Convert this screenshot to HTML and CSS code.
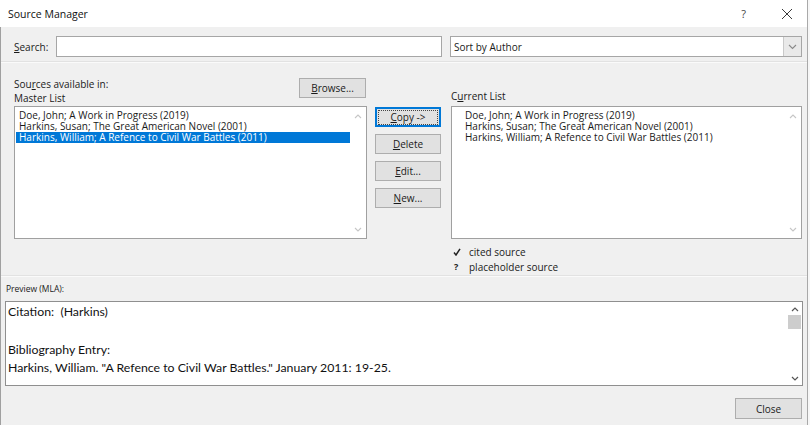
FILE: index.html
```html
<!DOCTYPE html>
<html>
<head>
<meta charset="utf-8">
<link rel="stylesheet" href="styles.css">
</head>
<body>
<div class="dialog">
  <div class="titlebar">
    <span class="title">Source Manager</span>
    <span class="help">?</span>
    <span class="xbtn">
      <svg width="12" height="12" viewBox="0 0 12 12"><path d="M1 1 L11 11 M11 1 L1 11" stroke="#3a3a3a" stroke-width="1" fill="none"/></svg>
    </span>
  </div>
  <div class="main">
    <div class="search-row">
      <span class="lbl"><u>S</u>earch:</span>
      <div class="input search-input"></div>
      <div class="combo">
        <span class="combo-text">Sort by Author</span>
        <span class="combo-btn">
          <svg width="9" height="6" viewBox="0 0 9 6"><path d="M1 1 L4.5 4.5 L8 1" stroke="#8a8a8a" stroke-width="1.1" fill="none"/></svg>
        </span>
      </div>
    </div>
    <div class="sep"></div>
    <div class="lists">
      <div class="col col-left">
        <div class="head head-left">
          <div class="head-text">
            <div>Sou<u>r</u>ces available in:</div>
            <div>Master List</div>
          </div>
          <div class="btn browse"><span><u>B</u>rowse...</span></div>
        </div>
        <div class="listbox">
          <div class="items">
            <div class="item">Doe, John; A Work in Progress (2019)</div>
            <div class="item">Harkins, Susan; The Great American Novel (2001)</div>
            <div class="item selected">Harkins, William; A Refence to Civil War Battles (2011)</div>
          </div>
          <div class="vscroll">
            <svg width="8" height="5" viewBox="0 0 8 5"><path d="M1 4 L4 1 L7 4" stroke="#c6c6c6" stroke-width="1.1" fill="none"/></svg>
            <svg width="8" height="5" viewBox="0 0 8 5"><path d="M1 1 L4 4 L7 1" stroke="#c6c6c6" stroke-width="1.1" fill="none"/></svg>
          </div>
        </div>
      </div>
      <div class="col col-mid">
        <div class="btn focused"><span class="focus-ring"><u>C</u>opy -&gt;</span></div>
        <div class="btn"><span><u>D</u>elete</span></div>
        <div class="btn"><span><u>E</u>dit...</span></div>
        <div class="btn"><span><u>N</u>ew...</span></div>
      </div>
      <div class="col col-right">
        <div class="head head-right"><span>C<u>u</u>rrent List</span></div>
        <div class="listbox">
          <div class="items items-right">
            <div class="item">Doe, John; A Work in Progress (2019)</div>
            <div class="item">Harkins, Susan; The Great American Novel (2001)</div>
            <div class="item">Harkins, William; A Refence to Civil War Battles (2011)</div>
          </div>
          <div class="vscroll">
            <svg width="8" height="5" viewBox="0 0 8 5"><path d="M1 4 L4 1 L7 4" stroke="#c6c6c6" stroke-width="1.1" fill="none"/></svg>
            <svg width="8" height="5" viewBox="0 0 8 5"><path d="M1 1 L4 4 L7 1" stroke="#c6c6c6" stroke-width="1.1" fill="none"/></svg>
          </div>
        </div>
        <div class="legend">
          <div class="legend-row">
            <span class="mark"><svg width="8" height="8" viewBox="0 0 8 8"><path d="M1 4.6 L3 7 L7 0.8" stroke="#222" stroke-width="1.5" fill="none"/></svg></span>
            <span>cited source</span>
          </div>
          <div class="legend-row">
            <span class="mark q">?</span>
            <span>placeholder source</span>
          </div>
        </div>
      </div>
    </div>
    <div class="sep sep2"></div>
    <div class="preview-label">Preview (MLA):</div>
    <div class="preview">
      <div class="preview-text">
        <div class="pline">Citation:&nbsp; (Harkins)</div>
        <div class="pline">&nbsp;</div>
        <div class="pline">Bibliography Entry:</div>
        <div class="pline">Harkins, William. "A Refence to Civil War Battles." January 2011: 19-25.</div>
      </div>
      <div class="pscroll">
        <svg width="8" height="5" viewBox="0 0 8 5"><path d="M1 4 L4 1 L7 4" stroke="#555" stroke-width="1.2" fill="none"/></svg>
        <div class="thumb"></div>
        <div class="pscroll-fill"></div>
        <svg width="8" height="5" viewBox="0 0 8 5"><path d="M1 1 L4 4 L7 1" stroke="#555" stroke-width="1.2" fill="none"/></svg>
      </div>
    </div>
    <div class="footer">
      <div class="btn close-btn"><span>Close</span></div>
    </div>
  </div>
</div>
</body>
</html>
```

FILE: styles.css
```css
html, body {
  margin: 0;
  padding: 0;
}
body {
  background: #f7f7f7;
  font-family: "Open Sans", "Noto Sans", sans-serif;
  font-size: 10px;
  color: #1a1a1a;
  width: 810px;
  height: 425px;
  overflow: hidden;
}
u { text-decoration: underline; text-underline-offset: 1px; }

.dialog {
  width: 807px;
  height: 425px;
  border-right: 1px solid #a9a9a9;
  display: flex;
  flex-direction: column;
}

.titlebar {
  height: 27px;
  background: #ffffff;
  display: flex;
  align-items: center;
  padding-left: 8px;
}
.title {
  font-size: 10.5px;
  color: #111;
  flex: 1;
}
.help {
  font-size: 11px;
  color: #444;
  margin-right: 35px;
}
.xbtn {
  display: flex;
  margin-right: 14px;
}

.main {
  flex: 1;
  background: #f0f0f0;
  border-left: 1px solid #a0a0a0;
  display: flex;
  flex-direction: column;
}

.search-row {
  display: flex;
  align-items: center;
  margin-top: 9px;
  padding-left: 13px;
  height: 21px;
}
.lbl {
  width: 42px;
}
.input {
  background: #fff;
  border: 1px solid #a6a6a6;
  box-sizing: border-box;
}
.search-input {
  width: 386px;
  height: 21px;
}
.combo {
  margin-left: 8px;
  width: 352px;
  height: 21px;
  box-sizing: border-box;
  background: #fff;
  border: 1px solid #a6a6a6;
  display: flex;
  align-items: center;
}
.combo-text {
  flex: 1;
  padding-left: 3px;
}
.combo-btn {
  width: 17px;
  height: 19px;
  background: #e9e9e9;
  border-left: 1px solid #c9c9c9;
  display: flex;
  align-items: center;
  justify-content: center;
}

.sep {
  height: 1px;
  background: #e2e2e2;
  border-bottom: 1px solid #fafafa;
  margin-top: 4px;
}

.lists {
  display: flex;
  padding-left: 13px;
}
.col { display: flex; flex-direction: column; }
.col-left { width: 353px; }
.col-mid { width: 66px; margin-left: 8px; padding-top: 44px; gap: 7px; }
.col-right { width: 351px; margin-left: 10px; }

.head {
  height: 43px;
  box-sizing: border-box;
}
.head-left {
  display: flex;
  justify-content: space-between;
  align-items: flex-start;
  padding-top: 14px;
}
.head-text { line-height: 14px; }
.head-right {
  display: flex;
  align-items: flex-end;
  padding-bottom: 3px;
}

.btn {
  height: 20px;
  box-sizing: border-box;
  background: #e1e1e1;
  border: 1px solid #adadad;
  display: flex;
  align-items: center;
  justify-content: center;
}
.browse {
  width: 67px;
  margin-top: 1px;
  margin-right: 1px;
}
.btn.focused {
  border: 1px solid #0078d7;
  box-shadow: inset 0 0 0 1px #0078d7;
}
.focus-ring {
  display: flex;
  align-items: center;
  justify-content: center;
  width: 58px;
  height: 13px;
  outline: 1px dotted #444;
}

.listbox {
  height: 133px;
  box-sizing: border-box;
  background: #fff;
  border: 1px solid #a0a0a0;
  display: flex;
}
.items {
  flex: 1;
  padding: 3px 0 0 1px;
}
.items-right { padding-left: 10px; }
.item {
  height: 11px;
  line-height: 11px;
  padding-left: 3px;
  white-space: nowrap;
}
.item.selected {
  background: #0078d7;
  color: #fff;
}
.vscroll {
  width: 16px;
  display: flex;
  flex-direction: column;
  justify-content: space-between;
  align-items: center;
  padding: 7px 0 6px;
}

.legend {
  padding-top: 5px;
  padding-left: 2px;
}
.legend-row {
  display: flex;
  align-items: center;
  height: 15px;
}
.mark {
  width: 16px;
  display: flex;
  align-items: center;
}
.mark.q {
  font-weight: 700;
  font-size: 9px;
  padding-left: 1px;
  width: 15px;
}

.sep2 { margin-top: 1px; }

.preview-label {
  font-size: 8.5px;
  padding-left: 5px;
  margin-top: 5px;
  height: 14px;
  line-height: 14px;
}
.preview {
  margin: 5px 4px 0 4px;
  height: 85px;
  box-sizing: border-box;
  background: #fff;
  border: 1px solid #8f8f8f;
  display: flex;
}
.preview-text {
  flex: 1;
  padding: 1px 0 0 2px;
  font-family: "Lato", "Open Sans", sans-serif;
  font-size: 12.3px;
  color: #111;
}
.pline {
  height: 18.8px;
  line-height: 18.8px;
  white-space: nowrap;
}
.pscroll {
  width: 15px;
  display: flex;
  flex-direction: column;
  align-items: center;
  padding: 5px 0 4px;
}
.thumb {
  width: 13px;
  height: 14px;
  background: #cdcdcd;
  margin-top: 3px;
}
.pscroll-fill { flex: 1; }

.footer {
  display: flex;
  justify-content: flex-end;
  padding-right: 5px;
  margin-top: 12px;
}
.close-btn {
  width: 67px;
  height: 21px;
}
```
